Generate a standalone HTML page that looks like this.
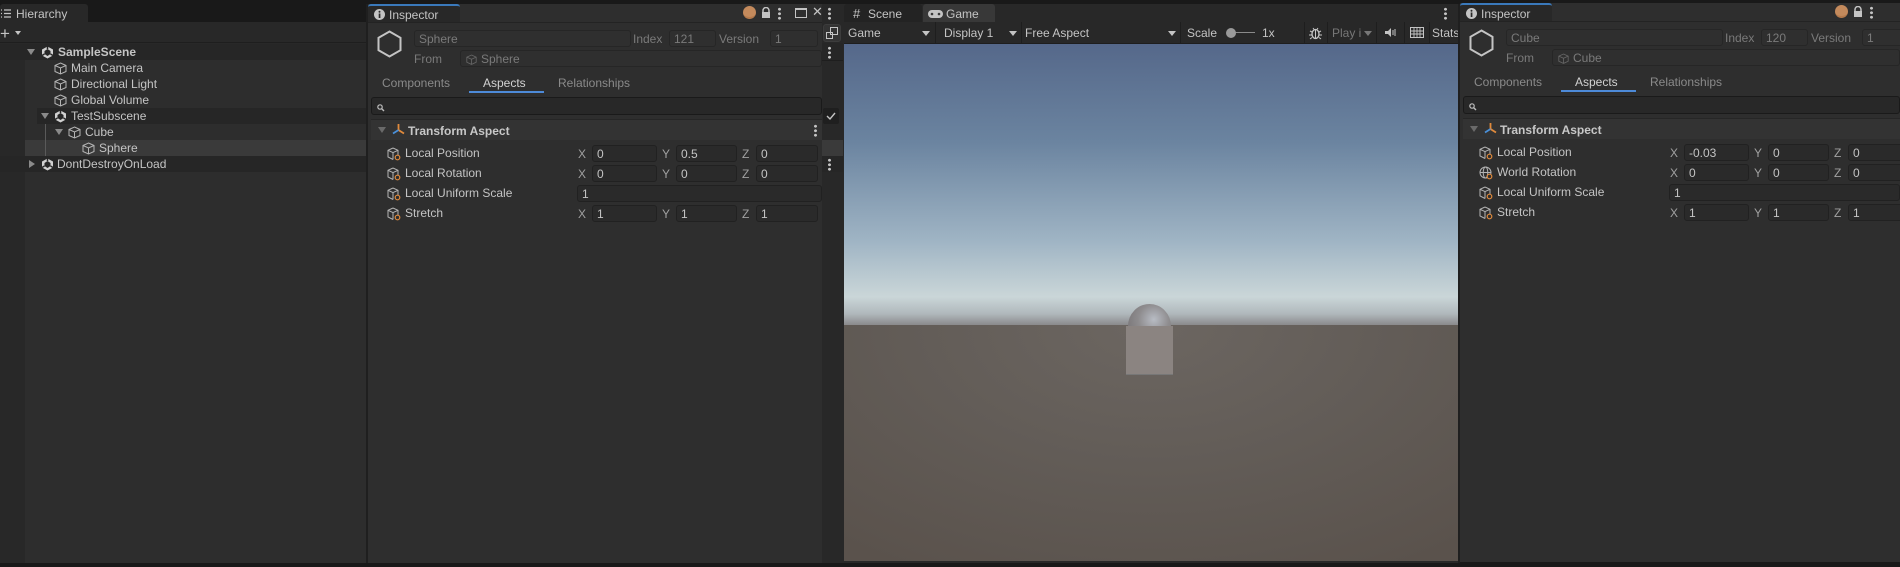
<!DOCTYPE html>
<html><head><meta charset="utf-8"><style>
*{box-sizing:border-box;margin:0;padding:0}
body{width:1900px;height:567px;overflow:hidden;background:#191919;font-family:"Liberation Sans",sans-serif;font-size:12px;color:#c4c4c4;position:relative}
.a{position:absolute;white-space:nowrap}
.tab{position:absolute;top:4px;height:19px;background:#282828;border-radius:3px 3px 0 0;padding:3px 0 0 16px;color:#c4c4c4}
.fld{position:absolute;height:17px;background:#2a2a2a;border:1px solid #212121;border-radius:3px;padding:1px 4px;color:#c4c4c4}
.dis{color:#7a7a7a;background:#2f2f2f;border-color:#262626}
.lbl{position:absolute;color:#9a9a9a}
.tri{position:absolute;width:0;height:0;border-left:4px solid transparent;border-right:4px solid transparent;border-top:6px solid #8a8a8a}
.trir{position:absolute;width:0;height:0;border-top:4px solid transparent;border-bottom:4px solid transparent;border-left:6px solid #8a8a8a}
.dots{position:absolute;width:3px;height:13px;background:radial-gradient(circle,#c4c4c4 1.3px,transparent 1.6px) 0 0/3px 4.5px repeat-y}
</style></head><body>

<!-- Hierarchy -->
<div class="a" style="left:0;top:23px;width:366px;height:540px;background:#282828"></div>
<div class="a" style="left:25px;top:44px;width:341px;height:519px;background:#2d2d2d"></div>
<div class="tab" style="left:0;width:88px;padding-left:16px">Hierarchy</div>
<svg class="a" style="left:0;top:9px" width="12" height="10"><path d="M1 1h1M1 4.5h1M1 8h1M4 1h7M4 4.5h7M4 8h7" stroke="#c4c4c4" stroke-width="1.3"/></svg>
<div class="a" style="left:0;top:22px;width:366px;height:21px;background:#282828;border-bottom:1px solid #1e1e1e"></div>
<div class="a" style="left:0;top:24px;font-size:17px;color:#c4c4c4">+</div>
<div class="tri" style="left:15px;top:31px;border-width:4px 3px 0;border-top-color:#c4c4c4"></div>
<div class="a" style="left:0;top:44px;width:366px;height:16px;background:#262626"></div>
<div class="a" style="left:37px;top:108px;width:329px;height:16px;background:#262626"></div>
<div class="a" style="left:25px;top:140px;width:341px;height:16px;background:#3a3a3a"></div>
<div class="a" style="left:0;top:156px;width:366px;height:16px;background:#262626"></div>
<div class="a" style="left:45px;top:124px;width:1px;height:32px;background:#5a5a5a"></div>
<div id="hier"></div>

<div class="a" style="left:366px;top:4px;width:2px;height:563px;background:#1f1f1f"></div>

<div id="insp1"></div>

<!-- narrow column -->
<div class="a" style="left:822px;top:4px;width:21px;height:559px;background:#282828"></div>
<div class="dots" style="left:828px;top:7px"></div>
<div class="a" style="left:823px;top:24px;width:18px;height:18px;border:1px solid #3c3c3c;border-radius:3px;background:#333"></div>
<svg class="a" style="left:826px;top:27px" width="12" height="12"><rect x="0.5" y="5.5" width="6" height="6" fill="none" stroke="#c4c4c4"/><rect x="4.5" y="0.5" width="7" height="7" fill="none" stroke="#c4c4c4"/></svg>
<div class="a" style="left:822px;top:43px;width:21px;height:17px;background:#262626"></div>
<div class="dots" style="left:828px;top:46px"></div>
<div class="a" style="left:822px;top:60px;width:21px;height:1px;background:#1e1e1e"></div>
<div class="a" style="left:823px;top:108px;width:16px;height:16px;background:#1f1f1f;border-radius:2px"></div>
<svg class="a" style="left:826px;top:111px" width="10" height="10"><path d="M1 5l3 3 5-6" fill="none" stroke="#c4c4c4" stroke-width="1.4"/></svg>
<div class="a" style="left:822px;top:140px;width:21px;height:16px;background:#3a3a3a"></div>
<div class="a" style="left:822px;top:156px;width:21px;height:16px;background:#262626"></div>
<div class="dots" style="left:828px;top:158px"></div>

<!-- Game panel -->
<div class="a" style="left:843px;top:4px;width:616px;height:559px;background:#282828"></div>
<div class="a" style="left:844px;top:4px;width:78px;height:19px;background:#232323;border-radius:3px 3px 0 0"></div>
<div class="a" style="left:853px;top:6px;font-size:13px">#</div>
<div class="a" style="left:868px;top:7px">Scene</div>
<div class="a" style="left:923px;top:4px;width:72px;height:19px;background:#383838;border-radius:3px 3px 0 0"></div>
<svg class="a" style="left:928px;top:10px" width="15" height="8"><rect x="0" y="0" width="15" height="8" rx="4" fill="#c4c4c4"/><circle cx="4" cy="4" r="1.3" fill="#383838"/><circle cx="11" cy="4" r="1.3" fill="#383838"/></svg>
<div class="a" style="left:946px;top:7px">Game</div>
<div class="dots" style="left:1444px;top:7px"></div>
<div class="a" style="left:844px;top:22px;width:614px;height:22px;background:#282828;border-bottom:1px solid #1e1e1e"></div>
<div class="a" style="left:848px;top:26px">Game</div><div class="tri" style="left:922px;top:31px;border-width:5px 4px 0;border-top-color:#c4c4c4"></div>
<div class="a" style="left:935px;top:22px;width:1px;height:21px;background:#1e1e1e"></div>
<div class="a" style="left:944px;top:26px">Display 1</div><div class="tri" style="left:1009px;top:31px;border-width:5px 4px 0;border-top-color:#c4c4c4"></div>
<div class="a" style="left:1021px;top:22px;width:1px;height:21px;background:#1e1e1e"></div>
<div class="a" style="left:1025px;top:26px">Free Aspect</div><div class="tri" style="left:1168px;top:31px;border-width:5px 4px 0;border-top-color:#c4c4c4"></div>
<div class="a" style="left:1180px;top:22px;width:1px;height:21px;background:#1e1e1e"></div>
<div class="a" style="left:1187px;top:26px">Scale</div>
<div class="a" style="left:1231px;top:32px;width:24px;height:1px;background:#8a8a8a"></div>
<div class="a" style="left:1226px;top:28px;width:10px;height:10px;border-radius:50%;background:#9a9a9a"></div>
<div class="a" style="left:1262px;top:26px">1x</div>
<div class="a" style="left:1304px;top:22px;width:1px;height:21px;background:#1e1e1e"></div>
<svg class="a" style="left:1309px;top:26px" width="13" height="14"><ellipse cx="6.5" cy="8" rx="3.5" ry="4.5" fill="none" stroke="#c4c4c4" stroke-width="1.3"/><path d="M1 5l2 1M12 5l-2 1M0 9h3M10 9h3M1 13l2-1.5M12 13l-2-1.5M4 2l1.5 2M9 2l-1.5 2M6.5 4v8" stroke="#c4c4c4"/></svg>
<div class="a" style="left:1327px;top:22px;width:1px;height:21px;background:#1e1e1e"></div>
<div class="a" style="left:1332px;top:26px;color:#777">Play i</div><div class="tri" style="left:1364px;top:31px;border-width:5px 4px 0;border-top-color:#777"></div>
<div class="a" style="left:1376px;top:22px;width:1px;height:21px;background:#1e1e1e"></div>
<svg class="a" style="left:1384px;top:27px" width="12" height="11"><path d="M1 4h3l3-3v9l-3-3H1z" fill="#c4c4c4"/><path d="M9 3v5M11 2v7" stroke="#c4c4c4"/></svg>
<div class="a" style="left:1404px;top:22px;width:1px;height:21px;background:#1e1e1e"></div>
<svg class="a" style="left:1410px;top:27px" width="14" height="11"><rect x="0.5" y="0.5" width="13" height="10" fill="none" stroke="#c4c4c4"/><path d="M0.5 4h13M0.5 7h13M4 0.5v10M7 0.5v10M10 0.5v10" stroke="#c4c4c4" stroke-width="0.9"/></svg>
<div class="a" style="left:1429px;top:22px;width:1px;height:21px;background:#1e1e1e"></div>
<div class="a" style="left:1432px;top:26px;width:26px;overflow:hidden">Stats</div>
<!-- game view -->
<div class="a" style="left:844px;top:44px;width:614px;height:281px;background:linear-gradient(#55688a 0%,#6b84a0 35%,#9fb4c4 70%,#cad6d8 90%,#b0b8bc 96%,#8a8a8c 100%)"></div>
<div class="a" style="left:844px;top:325px;width:614px;height:236px;background:radial-gradient(ellipse 80% 120% at 50% 0%,#6c6661 0%,#625c57 50%,#5a524c 100%)"></div>
<div class="a" style="left:1128px;top:304px;width:43px;height:44px;border-radius:50%;background:radial-gradient(circle at 60% 35%,#b8bcc4 0%,#8e8c8e 40%,#6a6668 100%)"></div>
<div class="a" style="left:1126px;top:326px;width:47px;height:49px;background:#8b8481;border-bottom:1px solid #777"></div>
<div class="a" style="left:1458px;top:4px;width:2px;height:563px;background:#1f1f1f"></div>

<div id="insp2"></div>

<div class="a" style="left:0;top:563px;width:1900px;height:4px;background:#191919"></div>

<script>
var cube='<svg width="13" height="13" viewBox="0 0 13 13"><path d="M6.5 1L12 3.5V9.5L6.5 12L1 9.5V3.5Z M1 3.5L6.5 6L12 3.5 M6.5 6V12" fill="none" stroke="#b4b4b4" stroke-width="1"/></svg>';
var cubeO='<svg width="14" height="14" viewBox="0 0 14 14"><path d="M6 1L11 3.3V8 M6 12.5L1 10V3.3L6 1 M1 3.3L6 5.6L11 3.3 M6 5.6V12.5" fill="none" stroke="#b4b4b4" stroke-width="1"/><circle cx="10.5" cy="10.5" r="2.3" fill="none" stroke="#e08a3c" stroke-width="1.2"/></svg>';
var globe='<svg width="14" height="14" viewBox="0 0 14 14"><circle cx="6.5" cy="6.5" r="5.5" fill="none" stroke="#b4b4b4"/><ellipse cx="6.5" cy="6.5" rx="2.3" ry="5.5" fill="none" stroke="#b4b4b4"/><path d="M1 6.5h11" stroke="#b4b4b4"/><circle cx="10.5" cy="10.5" r="2.3" fill="#2e2e2e" stroke="#e08a3c" stroke-width="1.2"/></svg>';
var unity='<svg width="13" height="13" viewBox="0 0 13 13"><path d="M6.5 0.5L12 3.5V9.5L6.5 12.5L1 9.5V3.5Z" fill="#d0d0d0"/><path d="M6.5 3L9.5 5V8L6.5 10L3.5 8V5Z" fill="#262626"/><path d="M6.5 0.5V3M12 9.5L9.5 8M1 9.5L3.5 8" stroke="#262626" stroke-width="1.5"/></svg>';
function A(x,y,html,st){return '<div class="a" style="left:'+x+'px;top:'+y+'px;'+(st||'')+'">'+html+'</div>';}
var h='';
h+='<div class="tri" style="left:27px;top:49px"></div>'+A(41,46,unity)+A(58,45,'SampleScene','font-weight:bold');
[['Main Camera',61],['Directional Light',77],['Global Volume',93]].forEach(function(r){h+=A(54,r[1]+1,cube)+A(71,r[1],r[0]);});
h+='<div class="tri" style="left:41px;top:113px"></div>'+A(54,110,unity)+A(71,109,'TestSubscene');
h+='<div class="tri" style="left:55px;top:129px"></div>'+A(68,126,cube)+A(85,125,'Cube');
h+=A(82,142,cube)+A(99,141,'Sphere');
h+='<div class="trir" style="left:29px;top:160px"></div>'+A(41,158,unity)+A(57,157,'DontDestroyOnLoad');
document.getElementById('hier').innerHTML=h;

function insp(o,name,idx,rows,w){
 var s='';
 s+=A(o-8,4,'','width:'+w+'px;height:559px;background:#2e2e2e');
 s+='<div class="tab" style="left:'+(o-8)+'px;width:92px;padding-left:21px;border-top:2px solid #3a79bb;padding-top:2px">Inspector</div>';
 s+=A(o-2,9,'<svg width="11" height="11"><circle cx="5.5" cy="5.5" r="5.5" fill="#c4c4c4"/><rect x="4.7" y="4.5" width="1.7" height="4.5" fill="#282828"/><circle cx="5.5" cy="2.8" r="1" fill="#282828"/></svg>');
 s+=A(o-8,22,'','width:'+w+'px;height:1px;background:#232323');
 s+=A(o+367,6,'','width:13px;height:13px;border-radius:50%;background:#c48a5c;border-bottom:2px solid #b57a4c');
 s+=A(o+385,7,'<svg width="10" height="11"><path d="M2 5V3.5a3 3 0 0 1 6 0V5" fill="none" stroke="#c4c4c4" stroke-width="1.5"/><rect x="1" y="5" width="8" height="6" fill="#c4c4c4"/></svg>');
 s+='<div class="dots" style="left:'+(o+402)+'px;top:7px"></div>';
 if(w>440){
 s+=A(o+419,8,'','width:12px;height:10px;border:1px solid #c4c4c4;border-top-width:2px');
 s+=A(o+436,4,'✕','font-size:13px;color:#c4c4c4');}
 s+=A(o+1,30,'<svg width="25" height="28"><path d="M12.5 1.5L23.5 7.8V20.2L12.5 26.5L1.5 20.2V7.8Z" fill="none" stroke="#c4c4c4" stroke-width="2"/></svg>');
 s+='<div class="fld dis" style="left:'+(o+38)+'px;top:30px;width:217px">'+name+'</div>';
 s+='<div class="lbl" style="left:'+(o+257)+'px;top:32px;color:#7a7a7a">Index</div>';
 s+='<div class="fld dis" style="left:'+(o+293)+'px;top:30px;width:47px">'+idx+'</div>';
 s+='<div class="lbl" style="left:'+(o+343)+'px;top:32px;color:#7a7a7a">Version</div>';
 s+='<div class="fld dis" style="left:'+(o+394)+'px;top:30px;width:'+(w>440?48:60)+'px">1</div>';
 s+='<div class="lbl" style="left:'+(o+38)+'px;top:52px;color:#7a7a7a">From</div>';
 s+='<div class="fld dis" style="left:'+(o+84)+'px;top:50px;width:'+(w-92)+'px;padding-left:20px">'+name+'</div>';
 s+=A(o+89,53,cube.replace(/#b4b4b4/g,'#666'),'transform:scale(.85)');
 s+='<div class="lbl" style="left:'+(o+6)+'px;top:76px;color:#8a8a8a">Components</div>';
 s+=A(o+107,76,'Aspects','color:#d2d2d2');
 s+=A(o+93,91,'','width:75px;height:2px;background:#4d8ad8');
 s+='<div class="lbl" style="left:'+(o+182)+'px;top:76px;color:#8a8a8a">Relationships</div>';
 s+='<div class="fld" style="left:'+(o-5)+'px;top:97px;width:'+(w-3)+'px;height:18px;background:#282828;border-color:#1a1a1a"></div>';
 s+=A(o+1,101,'<svg width="8" height="8"><circle cx="3" cy="3" r="2.2" fill="none" stroke="#bbb" stroke-width="1.2"/><path d="M4.5 4.5L7 7" stroke="#bbb" stroke-width="1.4"/></svg>');
 s+=A(o-5,119,'','width:'+(w-3)+'px;height:1px;background:#262626');
 s+=A(o-5,120,'','width:'+(w-3)+'px;height:20px;background:#333');
 s+='<div class="tri" style="left:'+(o+2)+'px;top:127px;border-top-color:#6a6a6a"></div>';
 s+=A(o+16,123,'<svg width="13" height="13"><path d="M6.5 1V7" stroke="#e08a3c" stroke-width="1.8"/><path d="M6.5 7L12 10.5" stroke="#e08a3c" stroke-width="1.8"/><path d="M6.5 7L1 10.5" stroke="#4a90d9" stroke-width="1.8"/></svg>');
 s+=A(o+32,124,'Transform Aspect','font-weight:bold;color:#c8c8c8');
 if(w>440) s+='<div class="dots" style="left:'+(o+438)+'px;top:124px"></div>';
 rows.forEach(function(r,i){
  var y=145+i*20;
  s+=A(o+11,y+2,r[1]=='g'?globe:cubeO);
  s+=A(o+29,y+1,r[0]);
  if(r[2].length==1){
   s+='<div class="fld" style="left:'+(o+201)+'px;top:'+y+'px;width:'+(w-209)+'px">'+r[2][0]+'</div>';
  }else{
   var lx=[o+202,o+286,o+366],fx=[o+216,o+300,o+380],fw=[65,61,w>440?62:70];
   ['X','Y','Z'].forEach(function(c,k){
    s+='<div class="lbl" style="left:'+lx[k]+'px;top:'+(y+2)+'px;color:#a0a0a0">'+c+'</div>';
    s+='<div class="fld" style="left:'+fx[k]+'px;top:'+y+'px;width:'+fw[k]+'px">'+r[2][k]+'</div>';
   });
  }
 });
 return s;
}
document.getElementById('insp1').innerHTML=insp(376,'Sphere','121',[['Local Position','c',['0','0.5','0']],['Local Rotation','c',['0','0','0']],['Local Uniform Scale','c',['1']],['Stretch','c',['1','1','1']]],454);
var s2=insp(1468,'Cube','120',[['Local Position','c',['-0.03','0','0']],['World Rotation','g',['0','0','0']],['Local Uniform Scale','c',['1']],['Stretch','c',['1','1','1']]],440);
document.getElementById('insp2').innerHTML='<div style="position:absolute;left:0;top:-1px;width:1900px;height:567px">'+s2+'</div>';
</script>
</body></html>
